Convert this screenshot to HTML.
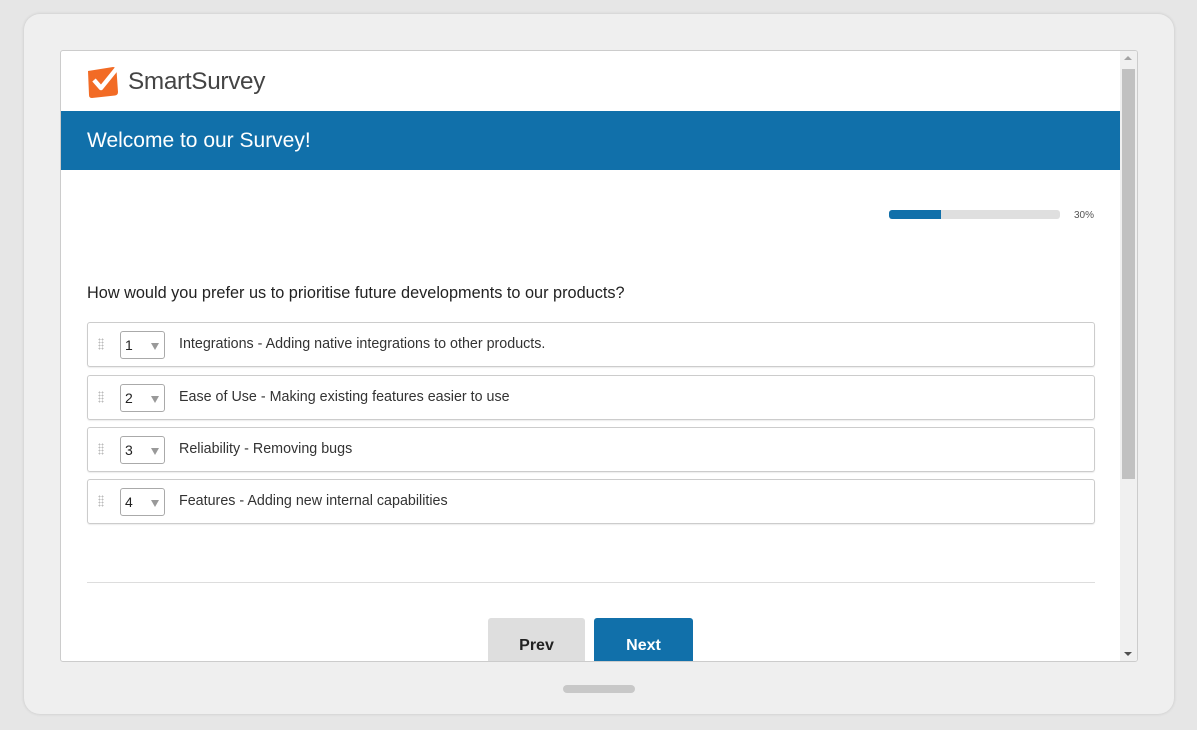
<!DOCTYPE html>
<html><head><meta charset="utf-8"><style>
*{box-sizing:border-box;margin:0;padding:0}
body{width:1197px;height:730px;overflow:hidden;background:#e6e6e6;font-family:"Liberation Sans",sans-serif;position:relative}
.dev{position:absolute;left:24px;top:14px;width:1150px;height:700px;background:#efefef;border-radius:16px;box-shadow:0 0 3px rgba(0,0,0,.15)}
.scr{position:absolute;left:60px;top:50px;width:1078px;height:612px;background:#fff;border:1px solid #ccc;border-radius:3px;overflow:hidden}
.home{position:absolute;left:563px;top:685px;width:72px;height:8px;border-radius:4px;background:#c8c8c8}
.sb{position:absolute;right:0;top:0;width:17px;height:100%;background:#f0f0f0}
.thumb{position:absolute;left:2px;top:18px;width:13px;height:410px;background:#c1c1c1}
.up,.dn{position:absolute;left:4px;width:0;height:0;border-left:4px solid transparent;border-right:4px solid transparent}
.up{top:5px;border-bottom:4px solid #a3a3a3}
.dn{bottom:5px;border-top:4px solid #505050}
.logo{position:absolute;left:26px;top:14px}
.logo span{position:absolute;left:41px;top:3px;font-size:24.3px;color:#444;letter-spacing:-.3px;white-space:nowrap}
.hdr{position:absolute;left:0;top:60px;width:1059px;height:59px;background:#1170aa;color:#fff;font-size:21px;padding:18px 26px 0}
.pb{position:absolute;left:828px;top:159px;width:171px;height:9px;background:#dfdfdf;border-radius:3px;overflow:hidden}
.pb i{display:block;width:52px;height:9px;background:#1170aa}
.pct{position:absolute;left:1013px;top:159px;font-size:10px;color:#555}
.q{position:absolute;left:26px;top:233px;font-size:16.3px;color:#222}
.row{position:absolute;left:26px;width:1008px;height:45px;border:1px solid #ccc;border-radius:3px;box-shadow:0 1px 1px rgba(0,0,0,.08)}
.grip{position:absolute;left:10px;top:15px;width:6px;height:12px;background-image:radial-gradient(circle,#bbb 0.8px,transparent 1px);background-size:3px 3px}
.sel{position:absolute;left:32px;top:8px;width:45px;height:28px;border:1px solid #aaa;border-radius:3px;font-size:14px;color:#222;padding:5px 4px}
.sel:after{content:"";position:absolute;right:5px;top:11px;border-left:4px solid transparent;border-right:4px solid transparent;border-top:7px solid #999}
.lbl{position:absolute;left:91px;top:13px;font-size:14.3px;color:#333;white-space:nowrap}
.hr{position:absolute;left:26px;top:531px;width:1008px;height:1px;background:#ddd}
.btn{position:absolute;top:567px;height:50px;border-radius:3px;font-size:16px;font-weight:bold;text-align:center;padding-top:19px}
</style></head><body>
<div class="dev"></div>
<div class="scr">
 <div class="logo"><svg width="36" height="34" viewBox="0 0 36 34"><path d="M1 6 L26 2 Q29 2 29.5 5 L31 27 Q31 30 28 30.5 L5 33 Q2 33 2 30 Z" fill="#f26b25"/><path d="M7 15 L14 23 L31 2" stroke="#fff" stroke-width="4.5" fill="none" stroke-linejoin="round"/></svg><span>SmartSurvey</span></div>
 <div class="hdr">Welcome to our Survey!</div>
 <div class="pb"><i></i></div><div class="pct">30%</div>
 <div class="q">How would you prefer us to prioritise future developments to our products?</div>
 <div class="row" style="top:271px"><div class="grip"></div><div class="sel">1</div><div class="lbl">Integrations - Adding native integrations to other products.</div></div>
 <div class="row" style="top:324px"><div class="grip"></div><div class="sel">2</div><div class="lbl">Ease of Use - Making existing features easier to use</div></div>
 <div class="row" style="top:376px"><div class="grip"></div><div class="sel">3</div><div class="lbl">Reliability - Removing bugs</div></div>
 <div class="row" style="top:428px"><div class="grip"></div><div class="sel">4</div><div class="lbl">Features - Adding new internal capabilities</div></div>
 <div class="hr"></div>
 <div class="btn" style="left:427px;width:97px;background:#dedede;color:#222">Prev</div>
 <div class="btn" style="left:533px;width:99px;background:#1170aa;color:#fff">Next</div>
 <div class="sb"><div class="up"></div><div class="thumb"></div><div class="dn"></div></div>
</div>
<div class="home"></div>
</body></html>
